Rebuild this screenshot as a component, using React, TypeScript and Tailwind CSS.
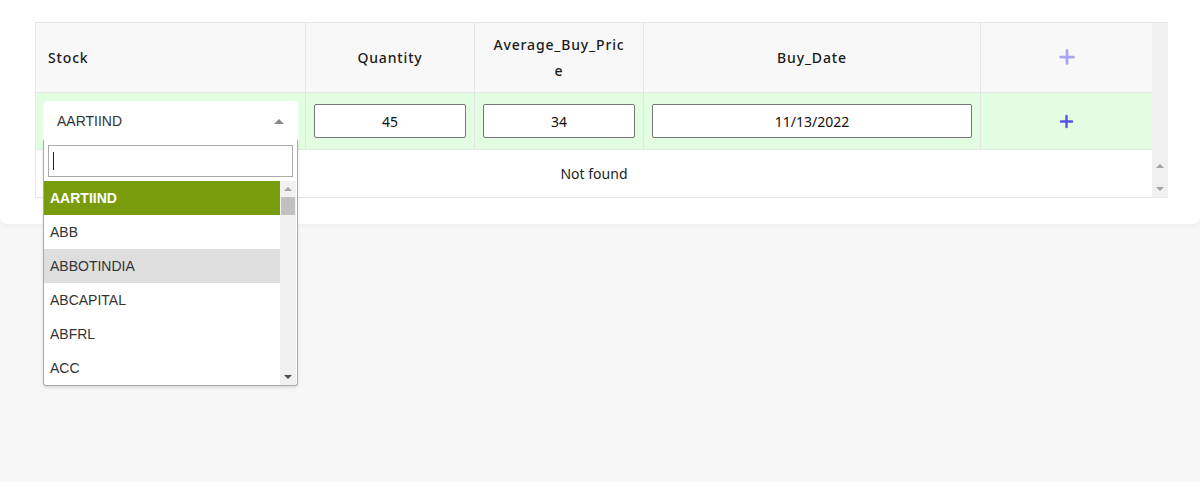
import { Plus } from "lucide-react"

const options = ["AARTIIND", "ABB", "ABBOTINDIA", "ABCAPITAL", "ABFRL", "ACC"]

const head = "font-['Noto_Sans',sans-serif] text-[14px] font-medium tracking-[0.06em] text-[#1a1a1a]"

export default function App() {
  return (
    <div className="min-h-[482px] w-[1200px] bg-[#f7f7f7]">
      {/* Card */}
      <div className="bg-white rounded-b-lg shadow-[0_2px_6px_rgba(0,0,0,0.04)] pt-[22px] pb-[26px] pl-[35px] pr-[32px]">
        <div className="relative border border-[#e6e6e6] grid grid-cols-[270px_169px_169px_337px_171px_16px]">
          {/* Header */}
          <div className={`${head} bg-[#f8f8f8] h-[70px] flex items-center pl-3 border-r border-b border-[#e6e6e6]`}>Stock</div>
          <div className={`${head} bg-[#f8f8f8] h-[70px] flex items-center justify-center border-r border-b border-[#e6e6e6]`}>Quantity</div>
          <div className={`${head} bg-[#f8f8f8] h-[70px] flex items-center justify-center text-center leading-[26px] border-r border-b border-[#e6e6e6] px-2`}>
            <span>
              Average_Buy_Pric
              <br />e
            </span>
          </div>
          <div className={`${head} bg-[#f8f8f8] h-[70px] flex items-center justify-center border-r border-b border-[#e6e6e6]`}>Buy_Date</div>
          <div className="bg-[#f8f8f8] h-[70px] flex items-center justify-center border-b border-[#e6e6e6] pb-[1px]">
            <Plus className="h-[22px] w-[22px] text-[#aaa4f6]" strokeWidth={3} />
          </div>
          <div className="row-span-3 bg-[#f0f0f0] flex flex-col justify-end items-center pb-[6px] gap-[19px]">
            <span className="w-0 h-0 border-x-[4px] border-x-transparent border-b-[4px] border-b-[#a3a3a3]" />
            <span className="w-0 h-0 border-x-[4px] border-x-transparent border-t-[4px] border-t-[#a3a3a3]" />
          </div>

          {/* Entry row */}
          <div className="bg-[#e2fde2] h-[57px] flex items-center px-[7px] border-r border-b border-[#e6e6e6]">
            <div className="w-full h-[40px] bg-white rounded-[5px] flex items-center justify-between pl-[14px] pr-[14px] font-['Liberation_Sans',sans-serif] text-[14px] text-[#333]">
              AARTIIND
              <span className="w-0 h-0 border-x-[5px] border-x-transparent border-b-[5px] border-b-[#888]" />
            </div>
          </div>
          <div className="bg-[#e2fde2] h-[57px] flex items-center px-2 border-r border-b border-[#e6e6e6]">
            <div className="w-full h-[34px] bg-white border border-[#767676] rounded-[2px] flex items-center justify-center font-['Noto_Sans',sans-serif] text-[14px] text-[#111]">45</div>
          </div>
          <div className="bg-[#e2fde2] h-[57px] flex items-center px-2 border-r border-b border-[#e6e6e6]">
            <div className="w-full h-[34px] bg-white border border-[#767676] rounded-[2px] flex items-center justify-center font-['Noto_Sans',sans-serif] text-[14px] text-[#111]">34</div>
          </div>
          <div className="bg-[#e2fde2] h-[57px] flex items-center px-2 border-r border-b border-[#e6e6e6]">
            <div className="w-full h-[34px] bg-white border border-[#767676] rounded-[2px] flex items-center justify-center font-['Noto_Sans',sans-serif] text-[14px] text-[#111]">11/13/2022</div>
          </div>
          <div className="bg-[#e2fde2] h-[57px] flex items-center justify-center border-b border-[#e6e6e6]">
            <Plus className="h-[19px] w-[19px] text-[#5a50ea]" strokeWidth={3} />
          </div>

          {/* Empty row */}
          <div className="col-span-5 h-[47px] flex items-center justify-center font-['Noto_Sans',sans-serif] text-[14px] text-[#222]">Not found</div>

          {/* Dropdown */}
          <div className="absolute left-[7px] top-[117px] w-[255px] bg-white border border-[#aaa] border-t-0 rounded-b-[3px] shadow-[0_2px_3px_rgba(0,0,0,0.1)] font-['Liberation_Sans',sans-serif] text-[14px] text-[#333]">
            <div className="px-[4px] pt-[5px] pb-[4px]">
              <div className="h-[32px] border border-[#aaa] flex items-center pl-[4px]">
                <span className="w-px h-[18px] bg-[#222]" />
              </div>
            </div>
            <div className="flex">
              <div className="flex-1">
                {options.map((o, i) => (
                  <div
                    key={o}
                    className={`h-[34px] flex items-center pl-[6px] ${
                      i === 0 ? "bg-[#789c0c] text-white font-bold" : i === 2 ? "bg-[#dedede]" : ""
                    }`}
                  >
                    {o}
                  </div>
                ))}
              </div>
              <div className="w-[16px] bg-[#f1f1f1] flex flex-col items-center pt-[6px] pb-[6px] mr-[1px]">
                <span className="w-0 h-0 border-x-[4px] border-x-transparent border-b-[4px] border-b-[#a3a3a3]" />
                <span className="mt-[6px] w-[14px] h-[18px] bg-[#c1c1c1]" />
                <span className="mt-auto w-0 h-0 border-x-[4px] border-x-transparent border-t-[4px] border-t-[#505050]" />
              </div>
            </div>
          </div>
        </div>
      </div>
    </div>
  )
}
